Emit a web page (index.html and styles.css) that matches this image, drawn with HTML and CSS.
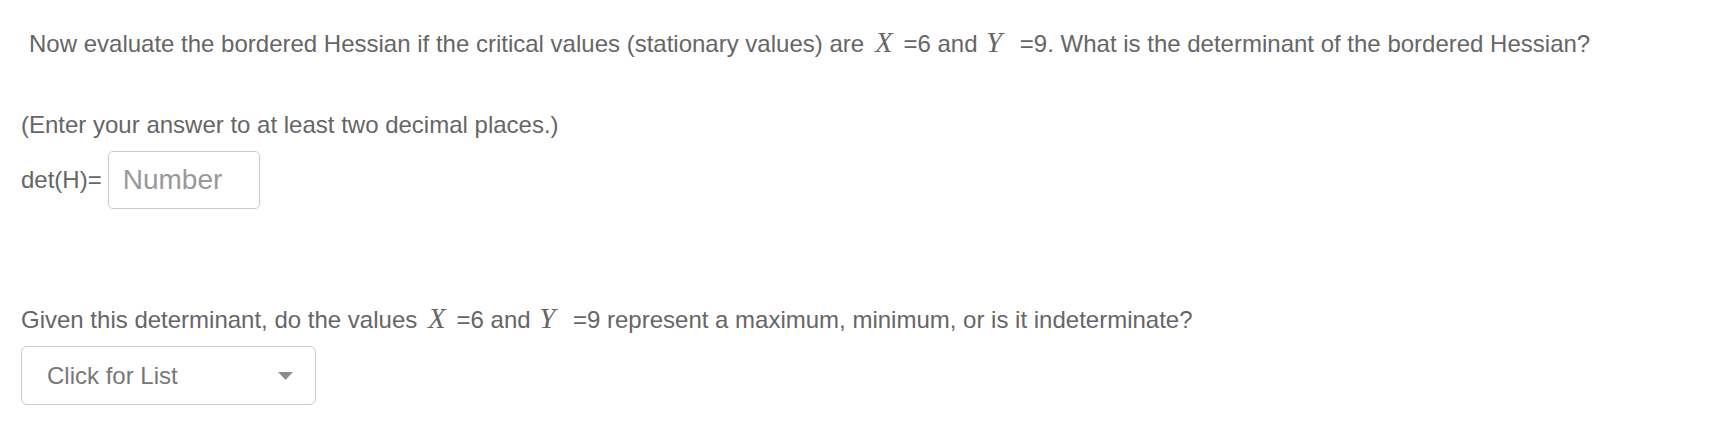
FILE: index.html
```html
<!DOCTYPE html>
<html>
<head>
<meta charset="utf-8">
<link rel="stylesheet" href="styles.css">
</head>
<body>
<div class="page">
  <p class="prompt">Now evaluate the bordered Hessian if the critical values (stationary values) are <span class="mi mi-x">X</span> =6 and <span class="mi mi-y">Y</span> =9. What is the determinant of the bordered Hessian?</p>
  <p class="note">(Enter your answer to at least two decimal places.)</p>
  <div class="answer-row">
    <label class="answer-label" for="det">det(H)=</label>
    <input class="answer-input" id="det" type="text" placeholder="Number">
  </div>
  <p class="prompt prompt-second">Given this determinant, do the values <span class="mi mi-x">X</span> =6 and <span class="mi mi-y">Y</span> =9 represent a maximum, minimum, or is it indeterminate?</p>
  <div class="select">
    <span class="select-text">Click for List</span>
    <svg class="select-caret" width="15" height="8" viewBox="0 0 15 8"><polygon points="0,0 15,0 7.5,8" fill="#8c8c8c"/></svg>
  </div>
</div>
</body>
</html>
```
FILE: styles.css
```css
html, body {
  margin: 0;
  padding: 0;
  background: #fff;
}
body {
  font-family: "Liberation Sans", Arial, Helvetica, sans-serif;
  font-size: 24px;
  color: #666;
}
.page {
  padding: 29px 0 0 21px;
}
p {
  margin: 0;
  line-height: 30px;
}
.prompt {
  padding-left: 8px;
}
.prompt-second {
  padding-left: 0;
  margin-top: 96px;
}
.mi {
  display: inline-block;
  font-family: "Liberation Serif", "Times New Roman", serif;
  font-style: italic;
  font-size: 29px;
  line-height: 0;
  text-align: center;
  color: #666;
}
.mi-x {
  width: 22px;
  margin-left: 2px;
  margin-right: 2px;
}
.mi-y {
  width: 20px;
  margin-left: 0;
  margin-right: 9px;
}
.note {
  margin-top: 51px;
}
.answer-row {
  display: flex;
  align-items: center;
  gap: 6px;
  margin-top: 11px;
}
.answer-label {
  font-size: 24px;
  line-height: 30px;
}
.answer-input {
  box-sizing: border-box;
  width: 152px;
  height: 58px;
  border: 1px solid #ccc;
  border-radius: 5px;
  padding: 0 14px;
  font-family: "Liberation Sans", Arial, sans-serif;
  font-size: 28px;
  color: #666;
  outline: none;
  margin: 0;
}
.answer-input::placeholder {
  color: #999;
  opacity: 1;
}
.select {
  box-sizing: border-box;
  margin-top: 11px;
  width: 295px;
  height: 59px;
  border: 1px solid #ccc;
  border-radius: 6px;
  display: flex;
  align-items: center;
  justify-content: space-between;
  padding: 0 22px 0 25px;
}
.select-text {
  color: #777;
  font-size: 24px;
}
.select-caret {
  display: block;
}
```
